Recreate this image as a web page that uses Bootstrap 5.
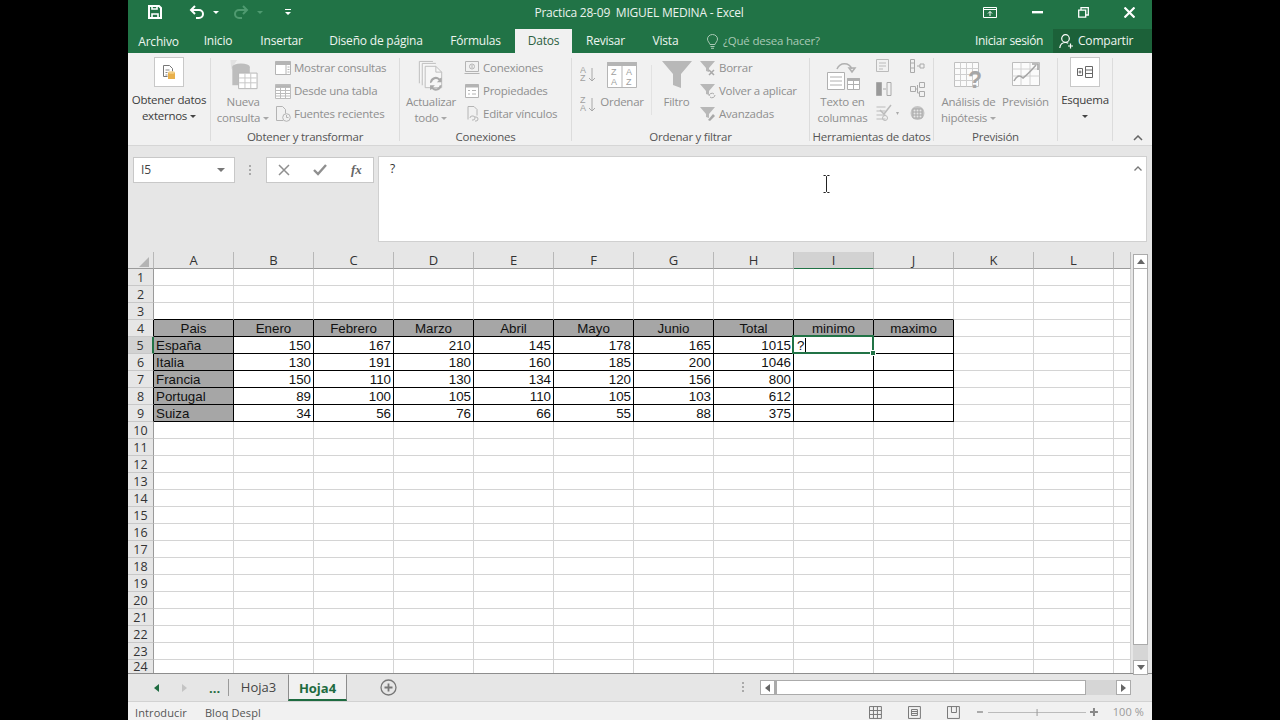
<!DOCTYPE html>
<html lang="es">
<head>
<meta charset="utf-8">
<title>Practica 28-09 MIGUEL MEDINA - Excel</title>
<link rel="stylesheet" href="https://cdn.jsdelivr.net/npm/bootstrap@5.3.0/dist/css/bootstrap.min.css">
<style>
html,body{height:100%;margin:0;background:#000;overflow:hidden}
body{font-family:"Open Sans","Noto Sans",sans-serif;font-size:12px;color:#444}
.xl-app{width:1024px;height:720px;margin:0 auto;background:#e6e6e6;position:relative;overflow:hidden}
.xl-title{height:29px;background:#217346;color:#eaf2ed;font-size:12px;padding-bottom:5px}
.xl-title .qat{width:230px}
.qat svg{flex:none}
.xl-title .ttl{letter-spacing:-.22px;margin-left:-2px;margin-top:1px}
.xl-title .win{width:230px}
.ql-save{margin-left:19px}.ql-undo{margin-left:26px}.ql-redo{margin-left:14px}.ql-more{margin-left:21px}
.qat .ql-c1{margin-left:8px;border-top-color:#fff}
.qat .ql-c2{margin-left:8px;border-top-color:#4f9a70}
.wn-min{margin-left:35px}.wn-max{margin-left:35px}.wn-close{margin-left:35px;margin-right:17px}
.xl-tabs{height:24px;background:#217346;color:#eef5f0;font-size:12px;letter-spacing:-.2px;line-height:24px}
.xl-tab{text-align:center;flex:none}
.xl-tab.on{background:#f1f1f1;color:#2c5f42}
.t1{width:61px;padding-top:1px}.t2{width:58px}.t3{width:69px}.t4{width:120px}.t5{width:79px}.t6{width:57px}.t7{width:67px}.t8{width:53px}
.xl-search{margin-left:14px;width:269px;color:#a9c9b5;font-size:11.5px;flex:none}
.xl-login{width:78px;text-align:left;white-space:nowrap;letter-spacing:-.35px;flex:none}
.xl-share{width:99px;background:#1c6139;padding-left:6px;flex:none}
.xl-ribbon{height:93px;background:#f1f1f1;border-bottom:1px solid #d6d6d6;font-size:11.5px;letter-spacing:-.25px;color:#8f8f8f;position:relative}
.rgrp{border-right:1px solid #dcdcdc;margin:5px 0;height:83px;flex:none;position:relative}
.rbody{height:74px;margin-top:-2px;flex:none}
.rlabel{height:14px;line-height:14px;text-align:center;color:#555;white-space:nowrap;flex:none}
.g1{width:83px}.g2{width:189px}.g3{width:172px}.g4{width:238px}.g5{width:124px}.g6{width:124px}.g7{width:55px}
.rbig{line-height:16px;text-align:center;white-space:nowrap}
.rbig svg{display:block;margin:0 auto}
.rbig.act{color:#3c3c3c}
.rbox{width:30px;height:30px;background:#fff;border:1px solid #c8c8c8;margin:-1px auto 5px}
.rsmall{height:23px;line-height:23px;white-space:nowrap}
.rsmall svg{margin-right:3px;flex:none}
.ricons{width:17px}
.ricons svg{display:block;height:23px}
.caret-s{display:inline-block;border-left:3px solid transparent;border-right:3px solid transparent;border-top:3px solid #a8a8a8;vertical-align:2px;margin-left:3px}
.caret-d{border-top-color:#444}
.caret-n{margin-left:0}
.rcollapse{position:absolute;right:9px;bottom:4px}
.big-nueva{width:64px;padding-top:4px}
.big-act{width:62px;padding-top:4px}
.txt1{margin-top:1px}
.sm-conn{padding-left:2px}
.sm-filt{margin-left:-1px}
.sort-block{width:79px}
.sort-col{width:18px;margin-left:8px;margin-top:9px;flex:none}
.ricons.sort-col svg{height:28px}
.ricons.sort-col svg+svg{margin-top:2px}
.big-ord{width:48px;padding-top:6px;flex:none}
.big-ord div{margin-top:6px}
.fdiv{width:1px;height:50px;background:#e2e2e2;margin-top:9px}
.big-filtro{width:49px;padding-top:4px}
.big-filtro div{margin-top:4px}
.big-texto{width:65px;padding-top:4px}
.rbig.big-texto svg{margin-bottom:2px}
.ric-1{width:34px}
.ricons .ric-wide{width:26px}
.big-ana{width:67px;padding-top:5px;padding-left:2px}
.big-prev{width:49px;padding-top:5px}
.big-prev div{margin-top:5px}
.xl-fbar{height:106px;padding:10px 5px 0}
.fname{width:102px;height:26px;background:#fff;border:1px solid #c8c8c8;padding:0 7px;font-size:12px;color:#444;line-height:24px;margin-top:1px}
.fname-c{border-left:4px solid transparent;border-right:4px solid transparent;border-top:4px solid #777;margin-right:2px}
.fdots{margin:9px 0 0 14px}
.fbtns{width:108px;height:26px;background:#fff;border:1px solid #c8c8c8;margin:1px 4px 0 14px}
.fb-x{margin-left:11px}.fb-ok{margin-left:23px}
.fb-fx{margin-left:24px;font-family:"Liberation Serif",serif;font-size:13px;color:#666}
.finput{flex:1;height:86px;background:#fff;border:1px solid #d0d0d0;padding:3px 4px 0 11px;font-size:12px;line-height:18px;color:#333}
.fchev{margin-top:6px}
.xl-gridwrap{height:422px;border-bottom:1px solid #8d8d8d}
.xl-sheet{width:1003px;height:421px;background:#fff}
.xl-grid{table-layout:fixed;border-collapse:separate;border-spacing:0;width:1003px;font-family:"Liberation Sans",Arial,sans-serif;font-size:13.33px;color:#111}
.xl-grid col.ch{width:26px}.xl-grid col.cc{width:80px}.xl-grid col.cm{width:17px}
.xl-grid td,.xl-grid th{height:17px;padding:1px 2px 0;line-height:15px;border-right:1px solid #d4d4d4;border-bottom:1px solid #d4d4d4;font-weight:400;white-space:nowrap;overflow:hidden}
.xl-grid thead th{padding-top:0;line-height:16px;background:#e6e6e6;border-right-color:#b8b8b8;border-bottom-color:#9a9a9a;text-align:center;font-family:"Open Sans",sans-serif;font-size:13px;color:#333}
.xl-grid tbody th{background:#e6e6e6;border-right-color:#9a9a9a;border-bottom-color:#c8c8c8;text-align:center;font-family:"Open Sans",sans-serif;font-size:12.5px;color:#333;padding:1px 0 0}
.xl-grid tbody tr.last th,.xl-grid tbody tr.last td{height:13px;line-height:13px;border-bottom:0;padding-top:0;overflow:visible}
.xl-grid tbody tr.last th{padding-top:1px;height:13px;line-height:12px}
.corner{display:block;margin:3px 2px 0 auto}
.xl-grid thead th.on{background:#d2d2d2;border-bottom:1px solid #217346}
.xl-grid tbody th.on{background:#d2d2d2;border-right:2px solid #217346}
.xl-grid .kb{border-bottom-color:#000}
.xl-grid .k{border-right-color:#000;border-bottom-color:#000;text-align:right}
.xl-grid .hd{background:#a6a6a6;text-align:center}
.xl-grid .nm{background:#a6a6a6;text-align:left;padding-left:2px}
.xl-grid tbody th.kr{border-right-color:#000}
.xl-grid .selcell{position:relative;overflow:visible;text-align:left;padding-left:3px}
.selbox{position:absolute;left:-2px;right:-1px;top:-2px;bottom:-1px;border:2px solid #217346;pointer-events:none}
.selbox i{position:absolute;right:-4px;bottom:-4px;width:6px;height:6px;background:#217346;border:1px solid #fff}
.tcaret{display:inline-block;width:1px;height:14px;background:#000;vertical-align:-2px;margin-left:1px}
.vscroll{width:21px;background:#e6e6e6;height:421px;padding:2px 3px 0 2px}
.sbtn{background:#fff;border:1px solid #ababab;height:15px;width:15px;flex:none}
.vthumb{height:376px;background:#fff;border:1px solid #ababab;border-top:0;width:15px}
.vtrack{height:15px;background:#d6d6d6;width:15px}
.xl-sheetbar{height:28px;background:#e6e6e6;border-bottom:1px solid #d2d2d2}
.snav{width:100px;flex:none}
.sn-l{margin-left:26px}.sn-r{margin-left:23px}
.sn-more{margin-left:22px;color:#1e6b40;font-size:13px;line-height:10px}
.ssep{width:1px;height:17px;background:#9a9a9a;flex:none}
.stab{width:59px;text-align:center;font-size:13px;color:#444;line-height:26px;height:27px;margin-top:-1px;flex:none}
.stab.on{background:#f1f1f1;color:#1e6b40;font-weight:700;border-bottom:2px solid #1e6b40;border-left:1px solid #8d8d8d;border-right:1px solid #8d8d8d;border-top:1px solid #f1f1f1}
.sadd{margin-left:33px;flex:none}
.sdots{margin-left:345px;flex:none}
.hscroll{margin-left:15px;width:371px;height:15px;flex:none}
.hthumb{width:312px;background:#fff;border:1px solid #ababab;height:15px;border-left:2px solid #ababab}
.htrack{width:30px;background:#d6d6d6;height:15px}
.xl-status{height:18px;background:#f1f1f1;font-size:11px;color:#555;letter-spacing:.1px;line-height:22px}
.sttxt{margin-left:7px}
.sttxt2{margin-left:18px}
.stview{width:275px;margin-left:auto;margin-right:8px;padding-top:2px;color:#9a9a9a;line-height:14px}
.st-1{margin-left:26px}.st-2{margin-left:26px}
.st-min{margin-left:17px}.st-sl{margin-left:5px}.st-pl{margin-left:4px}.st-pc{margin-left:15px;white-space:nowrap}
.ibeam{position:absolute;left:695px;top:175px}
</style>
</head>
<body>
<div class="xl-app">

  <div class="xl-title d-flex align-items-center justify-content-between">
    <div class="qat d-flex align-items-center">
      <svg class="ql-save" width="16" height="16" viewBox="0 0 16 16" fill="none" stroke="#fff" stroke-width="2"><path d="M2 2h10l2 2v10H2z"/><path d="M5 2v3h5V2M5 14v-4h6v4" stroke-width="1.6"/></svg>
      <svg class="ql-undo" width="16" height="14" viewBox="0 0 16 14" fill="none" stroke="#fff" stroke-width="2"><path d="M6 1 2 5l4 4"/><path d="M2 5h8a4 4 0 0 1 0 8H7"/></svg>
      <span class="caret-s ql-c1"></span>
      <svg class="ql-redo" width="16" height="14" viewBox="0 0 16 14" fill="none" stroke="#4f9a70" stroke-width="2"><path d="m10 1 4 4-4 4"/><path d="M14 5H6a4 4 0 0 0 0 8h3"/></svg>
      <span class="caret-s ql-c2"></span>
      <svg class="ql-more" width="8" height="8" viewBox="0 0 8 8" fill="#fff"><path d="M1 1h6v1H1zM1 4h6L4 7z"/></svg>
    </div>
    <div class="ttl">Practica 28-09&nbsp; MIGUEL MEDINA - Excel</div>
    <div class="win d-flex align-items-center justify-content-end">
      <svg width="14" height="11" viewBox="0 0 14 11" fill="none" stroke="#fff"><path d="M.5.5h13v10H.5z"/><path d="M.5 2.500h13"/><path d="M7 9V4.500M5 6.500l2-2 2 2"/></svg>
      <svg class="wn-min" width="11" height="3" viewBox="0 0 11 3"><path d="M0 0h11v2.400H0z" fill="#fff"/></svg>
      <svg class="wn-max" width="11" height="11" viewBox="0 0 11 11" fill="none" stroke="#fff" stroke-width="1.300"><path d="M.7 3.200h7v7h-7zM3 3V.7h7.300V8H8"/></svg>
      <svg class="wn-close" width="11" height="11" viewBox="0 0 11 11" stroke="#fff" stroke-width="2.200"><path d="m.5.5 10 10M10.500.5l-10 10"/></svg>
    </div>
  </div>

  <div class="xl-tabs d-flex">
    <div class="xl-tab t1">Archivo</div>
    <div class="xl-tab t2">Inicio</div>
    <div class="xl-tab t3">Insertar</div>
    <div class="xl-tab t4">Diseño de página</div>
    <div class="xl-tab t5">Fórmulas</div>
    <div class="xl-tab t6 on">Datos</div>
    <div class="xl-tab t7">Revisar</div>
    <div class="xl-tab t8">Vista</div>
    <div class="xl-search d-flex align-items-center">
      <svg class="me-1" width="13" height="15" viewBox="0 0 13 15" fill="none" stroke="#a9c9b5"><path d="M4 10.500C3.500 8.500 1.500 7.500 1.500 5a5 4.500 0 0 1 10 0c0 2.500-2 3.500-2.500 5.500zM4.500 12.500h4M5 14.300h3"/></svg>
      <span>¿Qué desea hacer?</span>
    </div>
    <div class="xl-login">Iniciar sesión</div>
    <div class="xl-share d-flex align-items-center">
      <svg class="me-1" width="15" height="15" viewBox="0 0 15 15" fill="none" stroke="#fff" stroke-width="1.200"><circle cx="6.500" cy="4.500" r="3.800"/><path d="M.8 14c.3-3.500 2.500-5.500 5.700-5.500 1 0 2 .2 2.700.7M11.500 9.500v5M9 12h5"/></svg>
      <span>Compartir</span>
    </div>
  </div>

  <div class="xl-ribbon d-flex">
    <div class="rgrp g1 d-flex flex-column">
      <div class="rbig act">
        <div class="rbox d-flex align-items-center justify-content-center">
          <svg width="14" height="16" viewBox="0 0 14 16" fill="none"><path d="M1.500 1.500h6l3 3v3M1.500 1.500v11h4" stroke="#777"/><path d="M3.500 6h4M3.500 8.500h2M3.500 11h2" stroke="#888"/><path d="M6 8.500h7v6.500H6z" fill="#e8b04c"/><ellipse cx="9.500" cy="8.500" rx="3.500" ry="1.300" fill="#f3cf86"/></svg>
        </div>
        <div>Obtener datos</div>
        <div>externos<span class="caret-s caret-d"></span></div>
      </div>
    </div>

    <div class="rgrp g2 d-flex flex-column">
      <div class="rbody d-flex">
        <div class="rbig big-nueva">
          <svg width="32" height="33" viewBox="0 0 32 34"><path d="M3 0h7L6 6l4 8-6-5z" fill="#e2e2e2"/><ellipse cx="14" cy="7" rx="9" ry="3.500" fill="#bdbdbd"/><path d="M5 7h18v19H5z" fill="#bdbdbd"/><path d="M11.500 13.500h19v16h-19z" fill="#fff" stroke="#b5b5b5"/><path d="M12 18.500h18M12 23.500h18M18 14v15M24 14v15" stroke="#c6c6c6"/></svg>
          <div class="txt1">Nueva</div>
          <div>consulta<span class="caret-s"></span></div>
        </div>
        <div>
          <div class="rsmall d-flex align-items-center"><svg width="16" height="16" viewBox="0 0 16 16" fill="none" stroke="#b4b4b4"><path d="M.5 1.500h15v13H.5z" fill="#fff"/><path d="M.5 2h15v2.500H.5z" fill="#b4b4b4"/><path d="M11 4.500v10M12.500 7h2M12.500 9.500h2M12.500 12h2"/></svg>Mostrar consultas</div>
          <div class="rsmall d-flex align-items-center"><svg width="16" height="16" viewBox="0 0 16 16" fill="none" stroke="#bcbcbc"><path d="M.5 1.500h15v14H.5z" fill="#fff"/><path d="M.5 2h15v2.500H.5z" fill="#b4b4b4"/><path d="M.5 7.500h15M.5 10.500h15M.5 13h15M5.500 4.500v11M10.500 4.500v11"/></svg>Desde una tabla</div>
          <div class="rsmall d-flex align-items-center"><svg width="16" height="16" viewBox="0 0 16 16" fill="none" stroke="#b4b4b4"><path d="M8 14.500H1.500V.5h6l3 3v4"/><circle cx="11.500" cy="11.500" r="3.800"/><path d="M11.500 9v2.500h2"/></svg>Fuentes recientes</div>
        </div>
      </div>
      <div class="rlabel">Obtener y transformar</div>
    </div>

    <div class="rgrp g3 d-flex flex-column">
      <div class="rbody d-flex">
        <div class="rbig big-act">
          <svg width="32" height="33" viewBox="0 0 32 34" fill="none" stroke="#bdbdbd"><path d="M4 24V1.500h14M7 26V3.500h14M10 28.500V6.500h11l6 6v16z" fill="#f6f6f6"/><path d="M21 6.500v6h6"/><path d="M15 24a6 6 0 0 1 10-5l2-1v5h-5l2-2a4 4 0 0 0-7 2zM27 26a6 6 0 0 1-10 4l-2 1v-5h5l-2 2a4 4 0 0 0 7-2z" fill="#a9a9a9" stroke="none"/></svg>
          <div class="txt1">Actualizar</div>
          <div>todo<span class="caret-s"></span></div>
        </div>
        <div class="sm-conn">
          <div class="rsmall d-flex align-items-center"><svg width="16" height="16" viewBox="0 0 16 16" fill="none" stroke="#b4b4b4"><path d="M1.500 1.500h13v10h-13zM.5 13.500h15"/><circle cx="8" cy="6.500" r="2.500"/><path d="M8 5v3"/></svg>Conexiones</div>
          <div class="rsmall d-flex align-items-center"><svg width="16" height="16" viewBox="0 0 16 16" fill="none" stroke="#b4b4b4"><path d="M1.500 1.500h13v13h-13z" fill="#fff"/><path d="M1.500 2h13v2H1.500z" fill="#b4b4b4"/><path d="M4 7.500h2M8 7.500h4M4 11h2M8 11h4"/></svg>Propiedades</div>
          <div class="rsmall d-flex align-items-center"><svg width="16" height="16" viewBox="0 0 16 16" fill="none" stroke="#b4b4b4"><path d="M4 13.500V.5h6l3 3v6"/><path d="M6 12a2 2 0 0 1 2-2h1a2 2 0 0 1 0 4h-1M14 13a2 2 0 0 0-2-2h-1M11 15h1a2 2 0 0 0 2-2"/></svg>Editar vínculos</div>
        </div>
      </div>
      <div class="rlabel">Conexiones</div>
    </div>

    <div class="rgrp g4 d-flex flex-column">
      <div class="rbody d-flex">
        <div class="d-flex sort-block">
          <div class="ricons sort-col">
            <svg width="18" height="28" viewBox="0 0 18 28" fill="none" stroke="#a8a8a8"><text x="0" y="8" font-size="9" fill="#a0a0a0" stroke="none" font-family="Liberation Sans">A</text><text x="0" y="16" font-size="9" fill="#a0a0a0" stroke="none" font-family="Liberation Sans">Z</text><path d="M12 3v13M9 13l3 3 3-3"/></svg>
            <svg width="18" height="28" viewBox="0 0 18 28" fill="none" stroke="#a8a8a8"><text x="0" y="8" font-size="9" fill="#a0a0a0" stroke="none" font-family="Liberation Sans">Z</text><text x="0" y="16" font-size="9" fill="#a0a0a0" stroke="none" font-family="Liberation Sans">A</text><path d="M12 3v13M9 13l3 3 3-3"/></svg>
          </div>
          <div class="rbig big-ord">
            <svg width="30" height="26" viewBox="0 0 30 26" fill="#fff" stroke="#b5b5b5"><path d="M.5.5h29v25H.5z"/><path d="M.5.5h29v3H.5z" fill="#b5b5b5"/><path d="M15 3.500v22"/><text x="4" y="13" font-size="9" fill="#a0a0a0" stroke="none" font-family="Liberation Sans">Z</text><text x="4" y="23" font-size="9" fill="#a0a0a0" stroke="none" font-family="Liberation Sans">A</text><text x="19" y="13" font-size="9" fill="#a0a0a0" stroke="none" font-family="Liberation Sans">A</text><text x="19" y="23" font-size="9" fill="#a0a0a0" stroke="none" font-family="Liberation Sans">Z</text></svg>
            <div>Ordenar</div>
          </div>
        </div>
        <div class="fdiv"></div>
        <div class="rbig big-filtro">
          <svg width="30" height="30" viewBox="0 0 30 30"><path d="M0 1h30L19 14v14l-8-3V14z" fill="#b8b8b8"/></svg>
          <div>Filtro</div>
        </div>
        <div class="sm-filt">
          <div class="rsmall d-flex align-items-center"><svg width="16" height="16" viewBox="0 0 16 16"><path d="M0 1h15L9 8v4L6 11V8z" fill="#b8b8b8"/><path d="m9 10 5 5m0-5-5 5" stroke="#a8a8a8" stroke-width="1.500"/></svg>Borrar</div>
          <div class="rsmall d-flex align-items-center"><svg width="16" height="16" viewBox="0 0 16 16"><path d="M0 1h15L9 8v4L6 11V8z" fill="#b8b8b8"/><path d="M9 13a3 3 0 0 1 5-2m1 1a3 3 0 0 1-5 2" stroke="#a8a8a8" fill="none"/></svg>Volver a aplicar</div>
          <div class="rsmall d-flex align-items-center"><svg width="16" height="16" viewBox="0 0 16 16"><path d="M0 1h15L9 8v4L6 11V8z" fill="#b8b8b8"/><path d="m8 14 5-6 2 2-5 5z" fill="#a8a8a8"/></svg>Avanzadas</div>
        </div>
      </div>
      <div class="rlabel">Ordenar y filtrar</div>
    </div>

    <div class="rgrp g5 d-flex flex-column">
      <div class="rbody d-flex">
        <div class="rbig big-texto">
          <svg width="34" height="32" viewBox="0 0 34 32" fill="none" stroke="#b0b0b0"><path d="M1.500 12.500h17v17h-17z" fill="#fff"/><path d="M4 17h12M4 21h12M4 25h12"/><path d="M21.500 18.500h12v11h-12z" fill="#fff"/><path d="M21.500 18.500h12v2h-12z" fill="#b0b0b0"/><path d="M27.500 20v9M22 24.500h11"/><path d="M11 9c3-7 12-7 15 0M26 12l-3-4h6z" stroke-width="1.500"/></svg>
          <div>Texto en</div>
          <div>columnas</div>
        </div>
        <div class="ricons ric-1">
          <svg width="17" height="23" viewBox="0 0 17 23" fill="none" stroke="#bbb"><path d="M1.500 3.500h12v12h-12zM4 7h7M4 10h7M4 13h4"/></svg>
          <svg width="17" height="23" viewBox="0 0 17 23" fill="none" stroke="#aaa"><path d="M1.500 3.500h5v13h-5z" fill="#999"/><path d="M12 3.500h4v13h-4zM8 10h3"/></svg>
          <svg class="ric-wide" width="26" height="23" viewBox="0 0 26 23" fill="none" stroke="#bbb"><path d="M1.500 5h9M1.500 9h9M1.500 13h9M1.500 17h9"/><path d="m5 8 4 4 7-9" stroke-width="1.500"/><circle cx="10" cy="16" r="2.500"/><path d="m21 10 3 0-1.500 3z" fill="#aaa" stroke="none"/></svg>
        </div>
        <div class="ricons">
          <svg width="17" height="23" viewBox="0 0 17 23" fill="none" stroke="#aaa"><path d="M1.500 3.500h4v13h-4zM1.500 7h4M1.500 12h4M8 10h3M11 8h4v4h-4z"/></svg>
          <svg width="17" height="23" viewBox="0 0 17 23" fill="none" stroke="#aaa"><path d="M1.500 7.500h5v5h-5zM10.500 3.500h5v5h-5zM10.500 12.500h5v5h-5zM6.500 10h2M8.500 6v8h2"/></svg>
          <svg width="17" height="23" viewBox="0 0 17 23"><circle cx="8.500" cy="11" r="7" fill="#c4c4c4"/><path d="M4 7h9v9H4z" fill="#e6e6e6" stroke="#a8a8a8"/><path d="M7 7v9M10 7v9M4 10h9M4 13h9" stroke="#a8a8a8"/></svg>
        </div>
      </div>
      <div class="rlabel">Herramientas de datos</div>
    </div>

    <div class="rgrp g6 d-flex flex-column">
      <div class="rbody d-flex">
        <div class="rbig big-ana">
          <svg width="32" height="32" viewBox="0 0 32 32" fill="none"><path d="M1.500 1.500h24v24h-24z" fill="#fbfbfb" stroke="#c0c0c0"/><path d="M1.500 7.500h24M1.500 13.500h24M1.500 19.500h24M7.500 1.500v24M13.500 1.500v24M19.500 1.500v24" stroke="#cfcfcf"/><text x="15" y="27" font-size="23" font-weight="700" fill="#a6a6a6" font-family="Liberation Sans">?</text></svg>
          <div class="txt1">Análisis de</div>
          <div>hipótesis<span class="caret-s"></span></div>
        </div>
        <div class="rbig big-prev">
          <svg width="30" height="28" viewBox="0 0 30 28" fill="none"><path d="M1.500 1.500h27v23h-27z" fill="#fbfbfb" stroke="#bdbdbd"/><path d="M1.500 8h27M1.500 15h27M10 1.500v23M19 1.500v23" stroke="#d2d2d2"/><path d="M3 20c3-6 6-6 9-3 4-3 7-6 13-13" stroke="#a6a6a6" stroke-width="1.600"/><path d="M21 3h6v6" stroke="#a6a6a6" stroke-width="1.600"/></svg>
          <div>Previsión</div>
        </div>
      </div>
      <div class="rlabel">Previsión</div>
    </div>

    <div class="rgrp g7 d-flex flex-column">
      <div class="rbig act">
        <div class="rbox d-flex align-items-center justify-content-center">
          <svg width="16" height="14" viewBox="0 0 16 14" fill="none" stroke="#666"><path d="M.5 3.500h5v7h-5zM3 5.500v3M1.500 7h3M8.500 1.500h7v11h-7zM8.500 5h7M8.500 8.500h7"/></svg>
        </div>
        <div>Esquema</div>
        <div><span class="caret-s caret-d caret-n"></span></div>
      </div>
    </div>

    <svg class="rcollapse" width="10" height="6" viewBox="0 0 10 6" fill="none" stroke="#666" stroke-width="1.500"><path d="m1 5 4-4 4 4"/></svg>
  </div>

  <div class="xl-fbar d-flex">
    <div class="fname d-flex align-items-center justify-content-between"><span>I5</span><span class="fname-c"></span></div>
    <svg class="fdots" width="3" height="11" viewBox="0 0 3 11" fill="#aaa"><path d="M0 0h2v2H0zM0 4h2v2H0zM0 8h2v2H0z"/></svg>
    <div class="fbtns d-flex align-items-center">
      <svg class="fb-x" width="12" height="12" viewBox="0 0 12 12" stroke="#8f8f8f" stroke-width="1.500"><path d="m1 1 10 10M11 1 1 11"/></svg>
      <svg class="fb-ok" width="14" height="12" viewBox="0 0 14 12" fill="none" stroke="#8f8f8f" stroke-width="2.400"><path d="m1 6 4 4 8-9"/></svg>
      <span class="fst-italic fw-bold fb-fx">fx</span>
    </div>
    <div class="finput d-flex justify-content-between">
      <span>?</span>
      <svg class="fchev" width="8" height="5" viewBox="0 0 8 5" fill="none" stroke="#777" stroke-width="1.300"><path d="m.5 4.500 3.500-3.500 3.500 3.500"/></svg>
    </div>
  </div>

  <div class="xl-gridwrap d-flex">
    <div class="xl-sheet">
      <table class="xl-grid">
        <colgroup><col class="ch"><col class="cc"><col class="cc"><col class="cc"><col class="cc"><col class="cc"><col class="cc"><col class="cc"><col class="cc"><col class="cc"><col class="cc"><col class="cc"><col class="cc"><col class="cm"></colgroup>
        <thead><tr><th><svg class="corner" width="10" height="10" viewBox="0 0 10 10"><path d="M10 0v10H0z" fill="#b4b4b4"/></svg></th><th>A</th><th>B</th><th>C</th><th>D</th><th>E</th><th>F</th><th>G</th><th>H</th><th class="on">I</th><th>J</th><th>K</th><th>L</th><th></th></tr></thead>
        <tbody>
          <tr><th>1</th><td></td><td></td><td></td><td></td><td></td><td></td><td></td><td></td><td></td><td></td><td></td><td></td><td></td></tr>
          <tr><th>2</th><td></td><td></td><td></td><td></td><td></td><td></td><td></td><td></td><td></td><td></td><td></td><td></td><td></td></tr>
          <tr><th>3</th><td class="kb"></td><td class="kb"></td><td class="kb"></td><td class="kb"></td><td class="kb"></td><td class="kb"></td><td class="kb"></td><td class="kb"></td><td class="kb"></td><td class="kb"></td><td></td><td></td><td></td></tr>
          <tr><th class="kr">4</th><td class="k hd">Pais</td><td class="k hd">Enero</td><td class="k hd">Febrero</td><td class="k hd">Marzo</td><td class="k hd">Abril</td><td class="k hd">Mayo</td><td class="k hd">Junio</td><td class="k hd">Total</td><td class="k hd">minimo</td><td class="k hd">maximo</td><td></td><td></td><td></td></tr>
          <tr><th class="on">5</th><td class="k nm">España</td><td class="k">150</td><td class="k">167</td><td class="k">210</td><td class="k">145</td><td class="k">178</td><td class="k">165</td><td class="k">1015</td><td class="k selcell">?<span class="tcaret"></span><span class="selbox"><i></i></span></td><td class="k"></td><td></td><td></td><td></td></tr>
          <tr><th class="kr">6</th><td class="k nm">Italia</td><td class="k">130</td><td class="k">191</td><td class="k">180</td><td class="k">160</td><td class="k">185</td><td class="k">200</td><td class="k">1046</td><td class="k"></td><td class="k"></td><td></td><td></td><td></td></tr>
          <tr><th class="kr">7</th><td class="k nm">Francia</td><td class="k">150</td><td class="k">110</td><td class="k">130</td><td class="k">134</td><td class="k">120</td><td class="k">156</td><td class="k">800</td><td class="k"></td><td class="k"></td><td></td><td></td><td></td></tr>
          <tr><th class="kr">8</th><td class="k nm">Portugal</td><td class="k">89</td><td class="k">100</td><td class="k">105</td><td class="k">110</td><td class="k">105</td><td class="k">103</td><td class="k">612</td><td class="k"></td><td class="k"></td><td></td><td></td><td></td></tr>
          <tr><th class="kr">9</th><td class="k nm">Suiza</td><td class="k">34</td><td class="k">56</td><td class="k">76</td><td class="k">66</td><td class="k">55</td><td class="k">88</td><td class="k">375</td><td class="k"></td><td class="k"></td><td></td><td></td><td></td></tr>
          <tr><th>10</th><td></td><td></td><td></td><td></td><td></td><td></td><td></td><td></td><td></td><td></td><td></td><td></td><td></td></tr>
          <tr><th>11</th><td></td><td></td><td></td><td></td><td></td><td></td><td></td><td></td><td></td><td></td><td></td><td></td><td></td></tr>
          <tr><th>12</th><td></td><td></td><td></td><td></td><td></td><td></td><td></td><td></td><td></td><td></td><td></td><td></td><td></td></tr>
          <tr><th>13</th><td></td><td></td><td></td><td></td><td></td><td></td><td></td><td></td><td></td><td></td><td></td><td></td><td></td></tr>
          <tr><th>14</th><td></td><td></td><td></td><td></td><td></td><td></td><td></td><td></td><td></td><td></td><td></td><td></td><td></td></tr>
          <tr><th>15</th><td></td><td></td><td></td><td></td><td></td><td></td><td></td><td></td><td></td><td></td><td></td><td></td><td></td></tr>
          <tr><th>16</th><td></td><td></td><td></td><td></td><td></td><td></td><td></td><td></td><td></td><td></td><td></td><td></td><td></td></tr>
          <tr><th>17</th><td></td><td></td><td></td><td></td><td></td><td></td><td></td><td></td><td></td><td></td><td></td><td></td><td></td></tr>
          <tr><th>18</th><td></td><td></td><td></td><td></td><td></td><td></td><td></td><td></td><td></td><td></td><td></td><td></td><td></td></tr>
          <tr><th>19</th><td></td><td></td><td></td><td></td><td></td><td></td><td></td><td></td><td></td><td></td><td></td><td></td><td></td></tr>
          <tr><th>20</th><td></td><td></td><td></td><td></td><td></td><td></td><td></td><td></td><td></td><td></td><td></td><td></td><td></td></tr>
          <tr><th>21</th><td></td><td></td><td></td><td></td><td></td><td></td><td></td><td></td><td></td><td></td><td></td><td></td><td></td></tr>
          <tr><th>22</th><td></td><td></td><td></td><td></td><td></td><td></td><td></td><td></td><td></td><td></td><td></td><td></td><td></td></tr>
          <tr><th>23</th><td></td><td></td><td></td><td></td><td></td><td></td><td></td><td></td><td></td><td></td><td></td><td></td><td></td></tr>
          <tr class="last"><th>24</th><td></td><td></td><td></td><td></td><td></td><td></td><td></td><td></td><td></td><td></td><td></td><td></td><td></td></tr>
        </tbody>
      </table>
    </div>
    <div class="vscroll">
      <div class="sbtn d-flex align-items-center justify-content-center"><svg width="8" height="5" viewBox="0 0 8 5"><path d="M4 0 8 5H0z" fill="#666"/></svg></div>
      <div class="vthumb"></div>
      <div class="vtrack"></div>
      <div class="sbtn d-flex align-items-center justify-content-center"><svg width="8" height="5" viewBox="0 0 8 5"><path d="M4 5 0 0h8z" fill="#666"/></svg></div>
    </div>
  </div>

  <div class="xl-sheetbar d-flex align-items-center">
    <div class="snav d-flex align-items-center">
      <svg class="sn-l" width="5" height="8" viewBox="0 0 5 8"><path d="M5 0v8L0 4z" fill="#1e6b40"/></svg>
      <svg class="sn-r" width="5" height="8" viewBox="0 0 5 8"><path d="M0 0v8l5-4z" fill="#c4c4c4"/></svg>
      <span class="fw-bold sn-more">...</span>
    </div>
    <div class="ssep"></div>
    <div class="stab">Hoja3</div>
    <div class="stab on">Hoja4</div>
    <svg class="sadd" width="17" height="17" viewBox="0 0 17 17" fill="none" stroke="#777" stroke-width="1.300"><circle cx="8.500" cy="8.500" r="7.500"/><path d="M8.500 4.500v8M4.500 8.500h8" stroke-width="1.800"/></svg>
    <svg class="sdots" width="3" height="11" viewBox="0 0 3 11" fill="#aaa"><path d="M0 0h2v2H0zM0 4h2v2H0zM0 8h2v2H0z"/></svg>
    <div class="hscroll d-flex">
      <div class="sbtn d-flex align-items-center justify-content-center"><svg width="5" height="8" viewBox="0 0 5 8"><path d="M5 0v8L0 4z" fill="#666"/></svg></div>
      <div class="hthumb"></div>
      <div class="htrack"></div>
      <div class="sbtn d-flex align-items-center justify-content-center"><svg width="5" height="8" viewBox="0 0 5 8"><path d="M0 0v8l5-4z" fill="#666"/></svg></div>
    </div>
  </div>

  <div class="xl-status d-flex">
    <span class="sttxt">Introducir</span>
    <span class="sttxt2">Bloq Despl</span>
    <div class="stview d-flex align-items-center">
      <svg width="13" height="13" viewBox="0 0 13 13" fill="none" stroke="#777"><path d="M.5.5h12v12H.5zM.5 4.500h12M.5 8.500h12M4.500.5v12M8.500.5v12"/></svg>
      <svg class="st-1" width="13" height="13" viewBox="0 0 13 13" fill="none" stroke="#777"><path d="M.5.5h12v12H.5zM3.500 3.500h6v6h-6zM3.500 5.500h6M3.500 7.500h6"/></svg>
      <svg class="st-2" width="13" height="13" viewBox="0 0 13 13" fill="none" stroke="#777"><path d="M.5.5h12v12H.5zM4.500.5v6h5v-6"/></svg>
      <svg class="st-min" width="6" height="2" viewBox="0 0 6 2"><path d="M0 0h6v2H0z" fill="#aaa"/></svg>
      <svg class="st-sl" width="99" height="7" viewBox="0 0 99 7"><path d="M0 3h99v1H0z" fill="#bbb"/><path d="M49 0h1v7h-1z" fill="#999"/></svg>
      <svg class="st-pl" width="8" height="8" viewBox="0 0 8 8"><path d="M3 0h2v3h3v2H5v3H3V5H0V3h3z" fill="#888"/></svg>
      <span class="st-pc">100 %</span>
    </div>
  </div>

  <svg class="ibeam" width="7" height="18" viewBox="0 0 7 18" fill="none" stroke="#222"><path d="M.5.5h2l1 1 1-1h2M3.500 1.500v15M.5 17.500h2l1-1 1 1h2"/></svg>
</div>
<script src="https://cdn.jsdelivr.net/npm/bootstrap@5.3.0/dist/js/bootstrap.bundle.min.js"></script>
</body>
</html>
